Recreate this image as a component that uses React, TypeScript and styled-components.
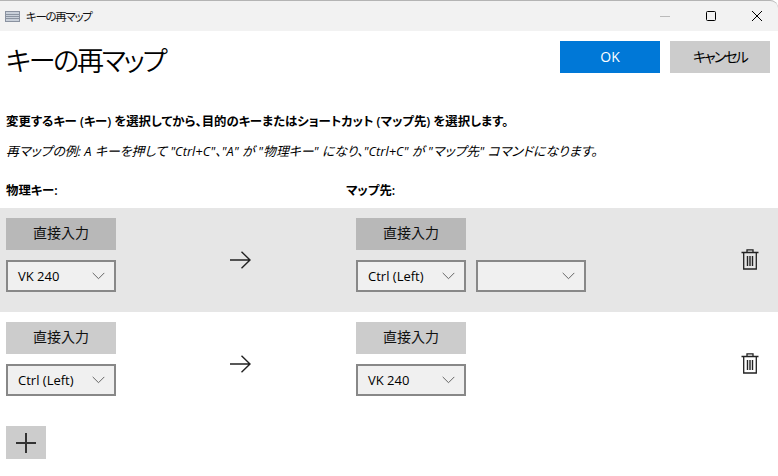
import React from "react";
import styled, { createGlobalStyle } from "styled-components";

const Global = createGlobalStyle`
  html, body { margin: 0; padding: 0; background: #fff; }
  body { font-family: "Open Sans", "Noto Sans CJK JP", sans-serif; color: #000; font-feature-settings: "palt"; }
  * { box-sizing: border-box; }
`;
const Window = styled.div`
  width: 778px; height: 476px; overflow: hidden; background: #fff;
  display: flex; flex-direction: column;
`;
const TitleBar = styled.div`
  height: 31px; flex: none; background: #f2f2f2; border-top: 1px solid #b4b4b4;
  border-top-right-radius: 8px;
  display: flex; align-items: center; padding-left: 5px;
`;
const TitleText = styled.span`
  font-family: "Noto Sans CJK JP", sans-serif; font-size: 11.5px; margin-left: 6px; color: #111;
  font-feature-settings: "palt"; letter-spacing: -1.300px;
`;
const WindowControls = styled.div`
  margin-left: auto; display: flex; align-items: center; gap: 36px; padding-right: 16px; color: #000;
`;
const Header = styled.div`
  height: 66px; flex: none; display: flex; align-items: flex-start; padding: 9px 8px 0 6px;
`;
const Heading = styled.h1`
  margin: 0; font-family: "Noto Sans CJK JP", sans-serif; font-weight: 350; font-size: 27px; line-height: 40px;
  font-feature-settings: "palt"; letter-spacing: -2.300px;
`;
const HeaderActions = styled.div`
  margin-left: auto; margin-top: 1px; display: flex; gap: 10px;
`;
const Action = styled.button<{ $primary?: boolean }>`
  width: 100px; height: 32px; border: 0; padding: 0 0 2px; font-family: "Open Sans", "Noto Sans CJK JP", sans-serif; font-size: 14px;
  font-feature-settings: "palt";
  background: ${p => (p.$primary ? "#0078d7" : "#cccccc")};
  color: ${p => (p.$primary ? "#fff" : "#000")};
`;
const CancelAction = styled(Action)`
  letter-spacing: -1.900px;
`;
const Instructions = styled.div`
  display: flex; flex-direction: column; gap: 9px;
  flex: none; height: 91px; padding: 15px 6px 0;
`;
const Lead = styled.p`
  margin: 0; font-size: 12.4px; font-weight: 600; line-height: 20px; height: 20px; white-space: nowrap;
`;
const Example = styled.p`
  margin: 0; font-size: 12.9px; font-style: italic; line-height: 20px; height: 20px; white-space: nowrap;
`;
const ColumnLabels = styled.div`
  display: grid; grid-template-columns: 340px 1fr; padding: 0 6px; height: 20px; flex: none; margin-top: -7px; margin-bottom: 7px;
  font-size: 12.4px; font-weight: 600; line-height: 20px;
`;
const Row = styled.div<{ $active?: boolean }>`
  height: 104px; flex: none; padding: 10px 0 0 6px;
  display: grid; grid-template-columns: 110px 240px 1fr 56px; align-items: center; align-content: start;
  grid-template-rows: 74px;
  background: ${p => (p.$active ? "#e6e6e6" : "transparent")};
`;
const KeyGroup = styled.div`
  display: flex; flex-direction: column; gap: 10px; align-items: flex-start;
`;
const SelectRow = styled.div`
  display: flex; gap: 10px;
`;
const TypeButton = styled.button<{ $active?: boolean }>`
  width: 110px; height: 32px; border: 0; padding: 0 0 4px; font-family: "Noto Sans CJK JP", sans-serif; font-size: 14px;
  color: #111; background: ${p => (p.$active ? "#b8b8b8" : "#cccccc")};
`;
const Select = styled.div`
  width: 110px; height: 32px; border: 2px solid #888; background: #f0f0f0;
  display: flex; align-items: center; justify-content: space-between;
  padding: 0 9px 0 10px; font-size: 13px; color: #000; white-space: nowrap;
`;
const ArrowCell = styled.div`
  display: flex; justify-content: center; padding-left: 9px; padding-top: 10px; color: #222;
`;
const TrashCell = styled.div`
  display: flex; justify-content: center; padding-top: 8px; color: #222;
`;
const AddButton = styled.button`
  width: 40px; height: 33px; margin: 10px 0 0 6px; padding: 0; border: 0; background: #cccccc;
  display: flex; align-items: center; justify-content: center; color: #333; flex: none;
`;

const Chevron = () => (
  <svg width="13" height="8" viewBox="0 0 13 8" fill="none" stroke="#666" strokeWidth="1">
    <path d="M.7.9 6.5 6.7 12.3.9" />
  </svg>
);
const Arrow = () => (
  <svg width="21" height="18" viewBox="0 0 21 18" fill="none" stroke="currentColor" strokeWidth="1.4">
    <path d="M0 9H20M11.5.7 20 9l-8.500 8.300" />
  </svg>
);
const Trash = () => (
  <svg width="18" height="21" viewBox="0 0 18 21" fill="none" stroke="currentColor" strokeWidth="1.300">
    <path d="M.5 3.500H17.500M6 3.300V.9H12V3.300M2.700 3.500V20H15.300V3.500" />
    <path d="M6.500 7V17M9 7V17M11.500 7V17" strokeWidth="1.400" />
  </svg>
);
const Plus = () => (
  <svg width="20" height="20" viewBox="0 0 20 20" stroke="currentColor" strokeWidth="2">
    <path d="M0 10H20M10 0V20" />
  </svg>
);
const KeyboardIcon = () => (
  <svg width="15" height="11" viewBox="0 0 15 11" fill="none">
    <rect x=".5" y=".5" width="14" height="10" fill="#c9d0da" stroke="#8a92a0" />
    <path d="M1 3.500H14M1 5.500H14M1 7.500H14" stroke="#7b8492" strokeWidth=".8" />
  </svg>
);

type Rows = { from: string; to: string[]; active?: boolean };
const rows: Rows[] = [
  { from: "VK 240", to: ["Ctrl (Left)", ""], active: true },
  { from: "Ctrl (Left)", to: ["VK 240"] },
];

const KeySelect = ({ value }: { value: string }) => (
  <Select>
    <span>{value}</span>
    <Chevron />
  </Select>
);

export default function App() {
  return (
    <Window>
      <Global />
      <TitleBar>
        <KeyboardIcon />
        <TitleText>キーの再マップ</TitleText>
        <WindowControls>
          <svg width="10" height="10" viewBox="0 0 10 10" stroke="#bbb"><path d="M0 5.500H10" /></svg>
          <svg width="10" height="10" viewBox="0 0 10 10" fill="none" stroke="#000"><rect x=".5" y=".5" width="9" height="9" rx="1" /></svg>
          <svg width="10" height="10" viewBox="0 0 10 10" stroke="#000"><path d="M0 0 10 10M10 0 0 10" /></svg>
        </WindowControls>
      </TitleBar>
      <Header>
        <Heading>キーの再マップ</Heading>
        <HeaderActions>
          <Action $primary>OK</Action>
          <CancelAction>キャンセル</CancelAction>
        </HeaderActions>
      </Header>
      <Instructions>
        <Lead>変更するキー (キー) を選択してから、目的のキーまたはショートカット (マップ先) を選択します。</Lead>
        <Example>再マップの例: A キーを押して "Ctrl+C"、"A" が "物理キー" になり、"Ctrl+C" が "マップ先" コマンドになります。</Example>
      </Instructions>
      <ColumnLabels>
        <span>物理キー:</span>
        <span>マップ先:</span>
      </ColumnLabels>
      {rows.map((r, i) => (
        <Row key={i} $active={r.active}>
          <KeyGroup>
            <TypeButton $active={r.active}>直接入力</TypeButton>
            <KeySelect value={r.from} />
          </KeyGroup>
          <ArrowCell><Arrow /></ArrowCell>
          <KeyGroup>
            <TypeButton $active={r.active}>直接入力</TypeButton>
            <SelectRow>
              {r.to.map((t, j) => <KeySelect key={j} value={t} />)}
            </SelectRow>
          </KeyGroup>
          <TrashCell><Trash /></TrashCell>
        </Row>
      ))}
      <AddButton aria-label="追加"><Plus /></AddButton>
    </Window>
  );
}
